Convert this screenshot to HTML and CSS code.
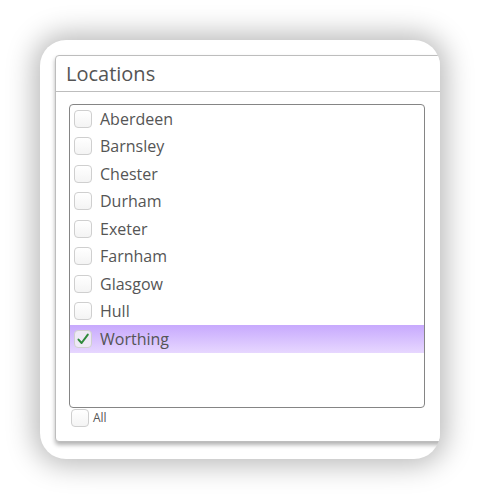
FILE: index.html
```html
<!DOCTYPE html>
<html>
<head>
<meta charset="utf-8">
<link rel="stylesheet" href="styles.css">
</head>
<body>
<div class="stage">
  <div class="card">
    <div class="panel">
      <div class="panel-head">Locations</div>
      <div class="panel-body">
        <div class="listbox">
          <div class="item"><span class="cb"></span><span class="lbl">Aberdeen</span></div>
          <div class="item"><span class="cb"></span><span class="lbl">Barnsley</span></div>
          <div class="item"><span class="cb"></span><span class="lbl">Chester</span></div>
          <div class="item"><span class="cb"></span><span class="lbl">Durham</span></div>
          <div class="item"><span class="cb"></span><span class="lbl">Exeter</span></div>
          <div class="item"><span class="cb"></span><span class="lbl">Farnham</span></div>
          <div class="item"><span class="cb"></span><span class="lbl">Glasgow</span></div>
          <div class="item"><span class="cb"></span><span class="lbl">Hull</span></div>
          <div class="item selected"><span class="cb checked"><svg width="14" height="14" viewBox="0 0 14 14"><path d="M2.5 7.6 L5.6 11 L11.8 2.6" fill="none" stroke="#2f8a3c" stroke-width="2" stroke-linecap="round" stroke-linejoin="round"/></svg></span><span class="lbl">Worthing</span></div>
        </div>
        <div class="all-row"><span class="cb small"></span><span class="all-lbl">All</span></div>
      </div>
    </div>
  </div>
</div>
</body>
</html>
```
FILE: styles.css
```css
html, body {
  margin: 0;
  padding: 0;
  background: #ffffff;
}
.stage {
  padding: 40px;
  width: 400px;
}
.card {
  width: 400px;
  height: 419px;
  background: #fff;
  border-radius: 26px;
  box-shadow: 0 0 28px 6px rgba(0, 0, 0, 0.28);
  padding: 15px 0 0 15px;
  box-sizing: border-box;
  overflow: hidden;
}
.panel {
  width: 392px;
  height: 387px;
  box-sizing: border-box;
  border: 1px solid #bdbdbd;
  border-radius: 4px;
  background: #fff;
  box-shadow: 0 3px 4px rgba(0, 0, 0, 0.3);
}
.panel-head {
  height: 36px;
  box-sizing: border-box;
  border-bottom: 1px solid #bdbdbd;
  padding: 4px 0 0 10px;
  font-family: "Open Sans", sans-serif;
  font-size: 20px;
  color: #555;
}
.panel-body {
  padding: 12px 0 0 13px;
}
.listbox {
  width: 356px;
  height: 304px;
  box-sizing: border-box;
  border: 1px solid #858585;
  border-radius: 4px;
  overflow: hidden;
}
.item {
  height: 27.5px;
  display: flex;
  align-items: center;
  font-family: "Open Sans", sans-serif;
  font-size: 16px;
  color: #555;
}
.item.selected {
  background: linear-gradient(to bottom, #c7a9fd, #e7d7ff);
}
.cb {
  width: 18px;
  height: 18px;
  box-sizing: border-box;
  border: 1px solid #cfcfcf;
  border-radius: 4px;
  background: linear-gradient(to bottom, #ffffff, #f4f4f4);
  margin-left: 4px;
  margin-right: 8px;
  flex: none;
  display: flex;
  align-items: center;
  justify-content: center;
}
.cb.checked {
  background: #eee8f6;
}
.all-row {
  display: flex;
  align-items: center;
  margin-left: 2px;
  height: 19px;
}
.cb.small {
  margin: 0 4px 0 0;
}
.all-lbl {
  font-family: "Open Sans", sans-serif;
  font-size: 12px;
  color: #555;
}
```
